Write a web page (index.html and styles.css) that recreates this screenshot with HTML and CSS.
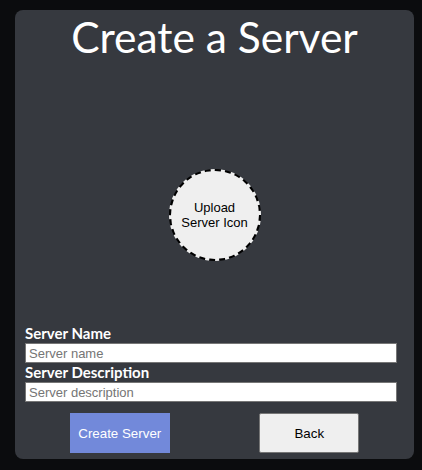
FILE: index.html
```html
<!DOCTYPE html>
<html>
<head>
<meta charset="utf-8">
<link rel="stylesheet" href="styles.css">
</head>
<body>
<div class="page">
  <div class="card">
    <h1 class="title">Create a Server</h1>
    <div class="icon-area">
      <div class="upload">Upload<br>Server Icon</div>
    </div>
    <form class="form">
      <label class="label" for="name">Server Name</label>
      <input class="field" id="name" type="text" placeholder="Server name">
      <label class="label" for="desc">Server Description</label>
      <input class="field" id="desc" type="text" placeholder="Server description">
      <div class="actions">
        <button type="button" class="btn btn-primary">Create Server</button>
        <button type="button" class="btn btn-secondary">Back</button>
      </div>
    </form>
  </div>
</div>
</body>
</html>
```

FILE: styles.css
```css
html, body {
  margin: 0;
  padding: 0;
  background: #0b0c0e;
  height: 100%;
}
.page {
  padding: 10px 0 0 15px;
}
.card {
  box-sizing: border-box;
  width: 399px;
  height: 449px;
  background: #36393f;
  border-radius: 8px;
  padding: 0 10px 6px;
  display: flex;
  flex-direction: column;
}
.title {
  margin: 5px 0 0;
  font-family: Lato, "Noto Sans", sans-serif;
  font-weight: 400;
  font-size: 42.5px;
  line-height: 44px;
  color: #ffffff;
  text-align: center;
}
.icon-area {
  flex: 1;
  display: flex;
  align-items: center;
  justify-content: center;
}
.upload {
  box-sizing: border-box;
  width: 92px;
  height: 92px;
  border-radius: 50%;
  border: 2px dashed #000;
  background: #efefef;
  display: flex;
  align-items: center;
  justify-content: center;
  text-align: center;
  font-family: "Liberation Sans", Arial, sans-serif;
  font-size: 13px;
  line-height: 15px;
  color: #000;
  margin-top: 46px;
}
.form {
  display: flex;
  flex-direction: column;
  margin: 0;
}
.label {
  display: block;
  font-family: Lato, "Noto Sans", sans-serif;
  font-weight: 700;
  font-size: 15px;
  line-height: 19px;
  color: #ffffff;
}
.field {
  box-sizing: border-box;
  width: 372px;
  height: 20px;
  margin: 0;
  padding: 1px 3px;
  border: 1px solid #767676;
  border-radius: 0;
  background: #fff;
  font-family: "Liberation Sans", Arial, sans-serif;
  font-size: 13px;
  color: #000;
}
.field::placeholder {
  color: #757575;
}
.actions {
  display: flex;
  justify-content: space-around;
  margin-top: 11px;
}
.btn {
  box-sizing: border-box;
  width: 100px;
  height: 40px;
  font-family: "Liberation Sans", Arial, sans-serif;
  font-size: 13.33px;
  cursor: pointer;
}
.btn-primary {
  background: #7289da;
  color: #fff;
  border: none;
  border-radius: 0;
}
.btn-secondary {
  background: #efefef;
  color: #000;
  border: 1px solid #767676;
  border-radius: 2px;
}
```
